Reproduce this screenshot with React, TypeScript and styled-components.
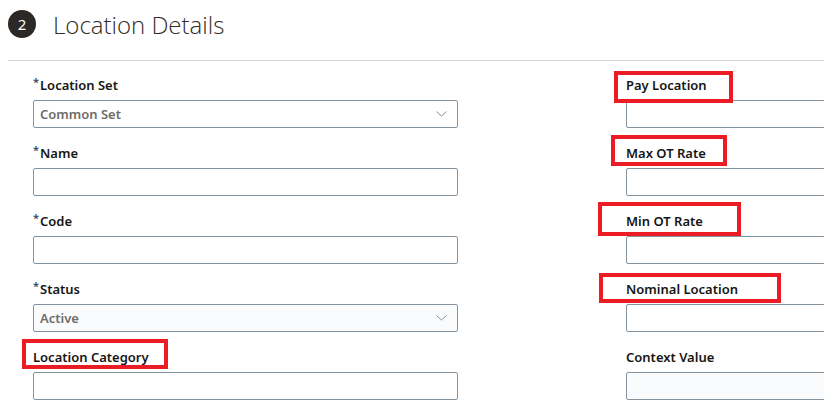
import styled, { createGlobalStyle } from 'styled-components'

const GlobalStyle = createGlobalStyle`
  body {
    margin: 0;
    background: #fff;
    font-family: "Noto Sans", "Open Sans", sans-serif;
  }
`

const Page = styled.div`
  width: 824px;
  height: 404px;
  overflow: hidden;
`

const Header = styled.div`
  display: flex;
  align-items: center;
  gap: 17px;
  height: 48px;
  margin-left: 8px;
  padding-bottom: 12px;
  border-bottom: 1px solid #d6d6d6;
`

const StepBadge = styled.div`
  width: 28px;
  height: 28px;
  border-radius: 50%;
  background: #2b2826;
  color: #fff;
  display: flex;
  align-items: center;
  justify-content: center;
  font-size: 15px;
`

const Title = styled.h2`
  margin: 0;
  font-family: "Open Sans", sans-serif;
  font-weight: 300;
  font-size: 24px;
  color: #312d2a;
`

const Form = styled.div`
  display: grid;
  grid-template-columns: 425px 425px;
  column-gap: 168px;
  padding: 16px 0 0 33px;
`

const Column = styled.div`
  display: flex;
  flex-direction: column;
  gap: 17px;
`

const Field = styled.div`
  position: relative;
  display: flex;
  flex-direction: column;
  gap: 5px;
`

const Label = styled.label`
  display: flex;
  align-items: flex-start;
  height: 18px;
  line-height: 16px;
  font-size: 13px;
  font-weight: 600;
  color: #161513;
`

const Required = styled.span`
  font-size: 11px;
  line-height: 11px;
  color: #2c4a6b;
  margin-top: -1px;
  margin-right: 1px;
`

const Input = styled.div<{ $muted?: boolean }>`
  box-sizing: border-box;
  height: 28px;
  border: 1px solid #8694a2;
  border-radius: 2px;
  background: ${p => (p.$muted ? '#f9fbfd' : '#fff')};
`

const Select = styled(Input)`
  display: flex;
  align-items: center;
  justify-content: space-between;
  padding: 0 10px 0 6px;
  font-size: 13px;
  font-weight: 600;
  color: #6f6c69;
`

const Highlight = styled.div<{ $x: number; $y: number; $w: number; $h: number }>`
  position: absolute;
  left: ${p => p.$x}px;
  top: ${p => p.$y}px;
  width: ${p => p.$w}px;
  height: ${p => p.$h}px;
  box-sizing: border-box;
  border: 4px solid #ec1c24;
  pointer-events: none;
`

const Chevron = () => (
  <svg width="11" height="6" viewBox="0 0 11 6">
    <path d="M0.5 0.5 L5.5 5 L10.5 0.5" fill="none" stroke="#8c8a88" strokeWidth="1" />
  </svg>
)

export default function App() {
  return (
    <Page>
      <GlobalStyle />
      <Header>
        <StepBadge>2</StepBadge>
        <Title>Location Details</Title>
      </Header>
      <Form>
        <Column>
          <Field>
            <Label><Required>*</Required>Location Set</Label>
            <Select>Common Set<Chevron /></Select>
          </Field>
          <Field>
            <Label><Required>*</Required>Name</Label>
            <Input />
          </Field>
          <Field>
            <Label><Required>*</Required>Code</Label>
            <Input />
          </Field>
          <Field>
            <Label><Required>*</Required>Status</Label>
            <Select $muted>Active<Chevron /></Select>
          </Field>
          <Field>
            <Label>Location Category</Label>
            <Input />
            <Highlight $x={-11} $y={-10} $w={146} $h={30} />
          </Field>
        </Column>
        <Column>
          <Field>
            <Label>Pay Location</Label>
            <Input />
            <Highlight $x={-12} $y={-6} $w={119} $h={32} />
          </Field>
          <Field>
            <Label>Max OT Rate</Label>
            <Input />
            <Highlight $x={-15} $y={-10} $w={116} $h={31} />
          </Field>
          <Field>
            <Label>Min OT Rate</Label>
            <Input />
            <Highlight $x={-28} $y={-11} $w={143} $h={34} />
          </Field>
          <Field>
            <Label>Nominal Location</Label>
            <Input />
            <Highlight $x={-27} $y={-8} $w={182} $h={30} />
          </Field>
          <Field>
            <Label>Context Value</Label>
            <Input $muted />
          </Field>
        </Column>
      </Form>
    </Page>
  )
}
